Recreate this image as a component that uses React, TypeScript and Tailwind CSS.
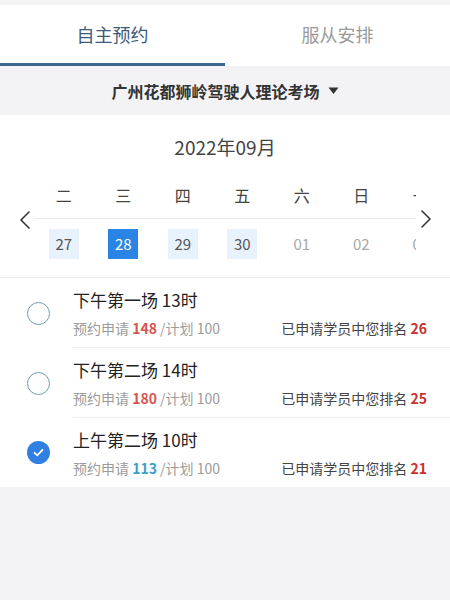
const font = { fontFamily: '"Noto Sans CJK SC", "Noto Sans", Roboto, sans-serif' }

const weekdays = ['二', '三', '四', '五', '六', '日', '一']
const dates = [
  { d: '27', state: 'open' },
  { d: '28', state: 'active' },
  { d: '29', state: 'open' },
  { d: '30', state: 'open' },
  { d: '01', state: 'off' },
  { d: '02', state: 'off' },
  { d: '03', state: 'off' },
]

const sessions = [
  { title: '下午第一场 13时', applied: 148, plan: 100, rank: 26, over: true, checked: false },
  { title: '下午第二场 14时', applied: 180, plan: 100, rank: 25, over: true, checked: false },
  { title: '上午第二场 10时', applied: 113, plan: 100, rank: 21, over: false, checked: true },
]

function Chevron({ dir }: { dir: 'left' | 'right' }) {
  return (
    <svg width="12" height="20" viewBox="0 0 12 20" fill="none">
      <path
        d={dir === 'left' ? 'M10 2 L2 10 L10 18' : 'M2 2 L10 10 L2 18'}
        stroke="#333"
        strokeWidth="1.6"
        strokeLinecap="round"
        strokeLinejoin="round"
      />
    </svg>
  )
}

function Radio({ checked }: { checked: boolean }) {
  if (checked) {
    return (
      <div className="flex h-[23px] w-[23px] items-center justify-center rounded-full bg-[#2f80e0]">
        <svg width="13" height="13" viewBox="0 0 13 13" fill="none">
          <path d="M2.5 6.8 L5.3 9.4 L10.5 3.8" stroke="#fff" strokeWidth="1.8" strokeLinecap="round" strokeLinejoin="round" />
        </svg>
      </div>
    )
  }
  return <div className="h-[23px] w-[23px] rounded-full border-[1.5px] border-[#6f9bb5]" />
}

export default function App() {
  return (
    <div className="h-[600px] w-[450px] bg-[#f3f3f6] pt-[5px]" style={font}>
      {/* tabs */}
      <div className="flex h-[61px] bg-white">
        <div className="relative flex flex-1 items-center justify-center pb-[2px] text-[18px] text-[#3e5a78]">
          自主预约
          <div className="absolute bottom-0 left-0 h-[3px] w-full bg-[#3c6890]" />
        </div>
        <div className="flex flex-1 items-center justify-center pb-[2px] text-[18px] text-[#9a9a9a]">服从安排</div>
      </div>

      {/* venue picker */}
      <div className="flex h-[49px] items-center justify-center gap-[8px] text-[16px] font-bold text-[#333]">
        广州花都狮岭驾驶人理论考场
        <svg width="11" height="8" viewBox="0 0 11 8">
          <path d="M0.5 0.5 H10.5 L5.5 7 Z" fill="#333" />
        </svg>
      </div>

      {/* calendar */}
      <div className="h-[163px] border-b border-[#ececec] bg-white">
        <div className="pt-[18px] text-center text-[19px] leading-[28px] text-[#444]">2022年09月</div>
        <div className="mt-[19px] flex items-center">
          <div className="flex w-[34px] justify-start pl-[19px]">
            <Chevron dir="left" />
          </div>
          <div className="w-[382px] overflow-hidden">
            <div className="flex w-[416px]">
              {weekdays.map((w, i) => (
                <div key={i} className="flex w-[59.5px] shrink-0 flex-col items-center">
                  <div className="flex h-[30px] items-center text-[16px] text-[#444]">{w}</div>
                  <div className="mb-[10px] mt-[8px] h-px w-full bg-[#ebebeb]" />
                  <div
                    className={
                      dates[i].state === 'active'
                        ? 'flex h-[30px] w-[30px] items-center justify-center bg-[#2a84e6] text-[15px] text-white'
                        : dates[i].state === 'open'
                          ? 'flex h-[30px] w-[30px] items-center justify-center bg-[#e8f2fd] text-[15px] text-[#555]'
                          : 'flex h-[30px] w-[30px] items-center justify-center text-[15px] text-[#a8a8a8]'
                    }
                  >
                    {dates[i].d}
                  </div>
                </div>
              ))}
            </div>
          </div>
          <div className="flex flex-1 justify-center pr-[14px] pb-[2px]">
            <Chevron dir="right" />
          </div>
        </div>
      </div>

      {/* sessions */}
      <div className="bg-white">
        {sessions.map((s, i) => (
          <div key={i} className="flex items-center pl-[27px]">
            <Radio checked={s.checked} />
            <div
              className={
                i < sessions.length - 1
                  ? 'ml-[23px] flex h-[70px] flex-1 flex-col justify-center border-b border-[#ececec] pr-[23px]'
                  : 'ml-[23px] flex h-[69px] flex-1 flex-col justify-center pr-[23px]'
              }
            >
              <div className="text-[17px] leading-[24px] text-[#222]">{s.title}</div>
              <div className="mt-[6px] flex items-center justify-between text-[14px] leading-[20px]">
                <span className="text-[#9b9b9b]">
                  预约申请 <span className={s.over ? 'font-bold text-[#d9534f]' : 'font-bold text-[#3b9fc8]'}>{s.applied}</span> /计划 {s.plan}
                </span>
                <span className="text-[#444]">
                  已申请学员中您排名 <span className="font-bold text-[#c9302c]">{s.rank}</span>
                </span>
              </div>
            </div>
          </div>
        ))}
      </div>
    </div>
  )
}
